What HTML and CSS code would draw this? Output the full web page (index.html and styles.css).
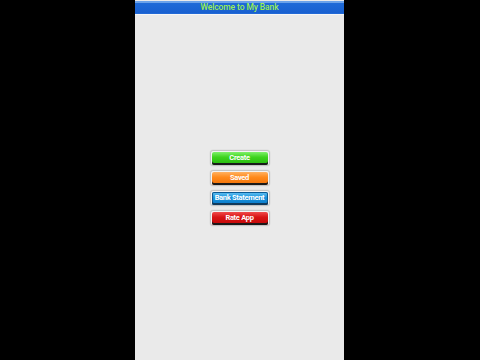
FILE: index.html
```html
<!DOCTYPE html>
<html>
<head>
<meta charset="utf-8">
<link rel="stylesheet" href="styles.css">
</head>
<body>
<div class="screen">
  <div class="header"><span class="title">Welcome to My Bank</span></div>
  <div class="content">
    <div class="menu">
      <div class="btn green"><span>Create</span></div>
      <div class="btn orange"><span>Saved</span></div>
      <div class="btn blue"><span>Bank Statement</span></div>
      <div class="btn red"><span>Rate App</span></div>
    </div>
  </div>
</div>
</body>
</html>
```
FILE: styles.css
```css
html, body {
  margin: 0;
  height: 100%;
  background: #000;
}
body {
  display: flex;
  padding-left: 135px;
}
.screen {
  width: 209px;
  height: 360px;
  background: #eaeaea;
  display: flex;
  flex-direction: column;
}
.header {
  margin-top: 1px;
  height: 13px;
  background: linear-gradient(#6aa2ea 0, #6aa2ea 2px, #1e6ad8 2px, #1860d0 12px, #2a72dc 13px);
  border-bottom: 1px solid #f6f6f6;
  display: flex;
  align-items: center;
  justify-content: center;
}
.title {
  font-family: Roboto, "Liberation Sans", sans-serif;
  font-weight: 500;
  font-size: 8.5px;
  color: #9bef52;
  letter-spacing: -0.1px;
  line-height: 1;
}
.content {
  flex: 1;
  display: flex;
  align-items: center;
  justify-content: center;
}
.menu {
  display: flex;
  flex-direction: column;
  gap: 4px;
  margin-top: 1px;
}
.btn {
  width: 56px;
  height: 13px;
  border: 1px solid #c4c4c4;
  border-radius: 3px;
  padding: 1px 1px 0;
  background: #f4f4f4;
  box-shadow: 0 0 0 0.5px #dcdcdc;
  display: flex;
}
.btn span {
  flex: 1;
  border-radius: 2px;
  display: flex;
  align-items: center;
  justify-content: center;
  font-family: Roboto, "Liberation Sans", sans-serif;
  font-weight: 700;
  font-size: 7.5px;
  letter-spacing: -0.3px;
  color: #fff;
  line-height: 1;
  padding-bottom: 2px;
  box-shadow: inset 0 -2px 0 #1a1a1a;
}
.green span {
  background: linear-gradient(#7ef06a 0, #3ed31e 40%, #24b80c 100%);
}
.orange span {
  background: linear-gradient(#ffb060 0, #ff8a1c 40%, #f07008 100%);
}
.blue span {
  background: linear-gradient(#6cc4f4 0, #1a96de 40%, #0a78c8 100%);
  box-shadow: inset 0 -2px 0 #123a5a, inset 0 0 0 1px #0b5a94;
}
.red span {
  background: linear-gradient(#f04a4a 0, #d81414 40%, #c00808 100%);
}
```
